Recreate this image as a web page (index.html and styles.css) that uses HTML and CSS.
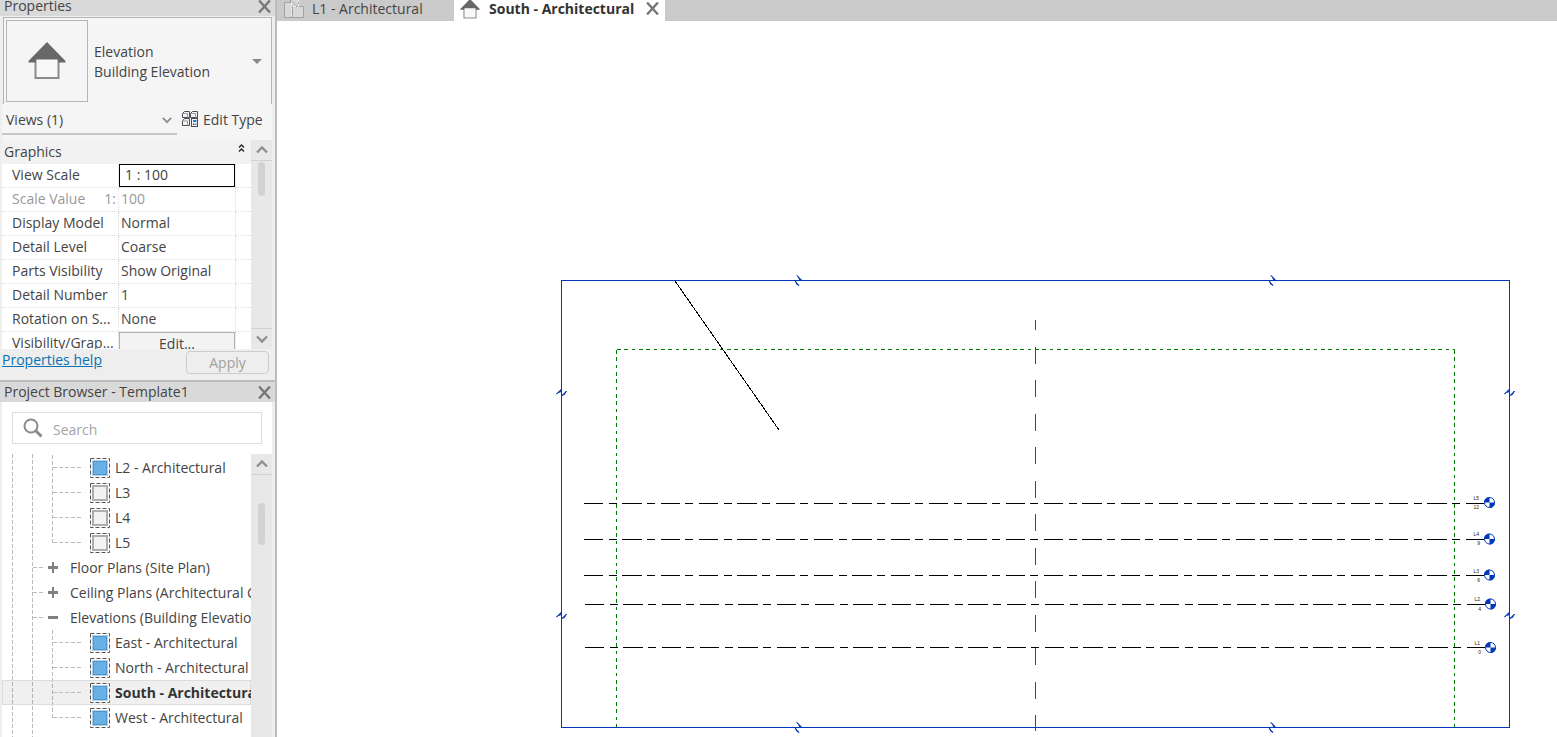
FILE: index.html
```html
<!DOCTYPE html>
<html lang="en">
<head>
<meta charset="utf-8">
<title>South - Architectural</title>
<link rel="stylesheet" href="styles.css">
</head>
<body>
<svg class="defs" aria-hidden="true">
  <symbol id="close" viewBox="0 0 12 12"><path d="M1 0.500L11 11.500M11 0.500L1 11.500" fill="none" stroke="#767676" stroke-width="2.200"/></symbol>
  <symbol id="up" viewBox="0 0 12 8"><path d="M1 6.500L6 1.500L11 6.500" fill="none" stroke="#8f8f8f" stroke-width="2.400"/></symbol>
  <symbol id="down" viewBox="0 0 12 8"><path d="M1 1.500L6 6.500L11 1.500" fill="none" stroke="#8f8f8f" stroke-width="2.400"/></symbol>
  <symbol id="house" viewBox="0 0 38 38"><path d="M7.500 17V36H30.500V17" fill="#f8f8f8" stroke="#8c8c8c" stroke-width="2"/><path d="M19 0L37.500 19V20.500H30V17.500H8V20.500H0.500V19Z" fill="#686868"/></symbol>
  <symbol id="view-on" viewBox="0 0 20 20"><rect x="0.500" y="0.500" width="19" height="19" fill="#fff" stroke="#555" stroke-dasharray="4 2"/><rect x="2" y="2" width="16" height="16" fill="#b5cfe3"/><rect x="3.500" y="3.500" width="13" height="13" fill="#69b0e5" stroke="#4b98d1"/></symbol>
  <symbol id="view-off" viewBox="0 0 20 20"><rect x="0.500" y="0.500" width="19" height="19" fill="#fff" stroke="#555" stroke-dasharray="4 2"/><rect x="3" y="3" width="14" height="14" fill="#f2f2f2" stroke="#adadad" stroke-width="2"/></symbol>
</svg>
<div class="app">
  <aside class="side">
    <section class="panel properties">
      <header class="bar bar-first"><h2>Properties</h2><button class="close" aria-label="Close properties"><svg><use href="#close"/></svg></button></header>
      <button class="type">
        <span class="type-icon"><svg><use href="#house"/></svg></span>
        <span class="type-name">Elevation<br>Building Elevation</span>
        <span class="triangle"></span>
      </button>
      <div class="filter">
        <div class="pick">
          <select aria-label="Property filter"><option>Views (1)</option></select>
          <svg class="chev"><use href="#down"/></svg>
        </div>
        <button class="edit-type">
          <svg viewBox="0 0 17 17"><g fill="#f4f4f6" stroke="#4c4c55"><path d="M0.500 6.500V2.500L2.500 0.500H7.500V6.500ZM8.500 6.500V2.500L10.500 0.500H15.500V6.500ZM0.500 14.500V10L2.500 7.500H7.500V14.500Z"/><path d="M0.500 2.500H5.500V6.500M8.500 2.500H13.500V6.500M0.500 10H5.500V14.500" stroke="#9a9aa2"/><rect x="9.500" y="7.500" width="6" height="8"/></g><path d="M11 9H14.500V11H11Z" fill="#1780d0"/><path d="M11 12.500H12.500V14H11ZM13.500 12.500H14.500V14H13.500Z" fill="#4c4c55"/></svg>
          Edit Type</button>
      </div>
      <div class="grid">
        <div class="grid-main">
          <button class="group">Graphics <svg viewBox="0 0 6 8"><path d="M0.500 3.500L3 1L5.500 3.500M0.500 7.500L3 5L5.500 7.500" fill="none" stroke="#222" stroke-width="1.300"/></svg></button>
          <table>
            <tr><th><label for="scale">View Scale</label></th><td class="field"><input id="scale" value="1 : 100"></td><td></td></tr>
            <tr class="off"><th>Scale Value <span>1:</span></th><td>100</td><td></td></tr>
            <tr><th>Display Model</th><td>Normal</td><td></td></tr>
            <tr><th>Detail Level</th><td>Coarse</td><td></td></tr>
            <tr><th>Parts Visibility</th><td>Show Original</td><td></td></tr>
            <tr><th>Detail Number</th><td>1</td><td></td></tr>
            <tr><th>Rotation on S...</th><td>None</td><td></td></tr>
            <tr><th>Visibility/Grap...</th><td class="field"><button>Edit...</button></td><td></td></tr>
          </table>
        </div>
        <div class="scroll"><button aria-label="Scroll up"><svg class="chev"><use href="#up"/></svg></button><div class="thumb"></div><button class="last" aria-label="Scroll down"><svg class="chev"><use href="#down"/></svg></button></div>
      </div>
      <footer class="foot"><a href="#help">Properties help</a><button disabled>Apply</button></footer>
    </section>
    <section class="panel browser">
      <header class="bar"><h2>Project Browser - Template1</h2><button class="close" aria-label="Close project browser"><svg><use href="#close"/></svg></button></header>
      <div class="browser-body">
        <label class="search">
          <svg viewBox="0 0 20 20"><circle cx="8" cy="8" r="6.500" fill="none" stroke="#8a8a8a" stroke-width="2"/><path d="M12.500 12.500L18.500 18.500" stroke="#8a8a8a" stroke-width="3"/></svg>
          <input type="search" placeholder="Search" aria-label="Search">
        </label>
        <div class="tree-wrap">
          <ul class="tree">
            <li><ul class="views">
              <li><svg><use href="#view-on"/></svg>L2 - Architectural</li>
              <li><svg><use href="#view-off"/></svg>L3</li>
              <li><svg><use href="#view-off"/></svg>L4</li>
              <li><svg><use href="#view-off"/></svg>L5</li>
            </ul></li>
            <li><div class="branch"><i class="sign plus"></i>Floor Plans (Site Plan)</div></li>
            <li><div class="branch"><i class="sign plus"></i>Ceiling Plans (Architectural Ceiling Plan)</div></li>
            <li><div class="branch"><i class="sign"></i>Elevations (Building Elevation)</div>
              <ul class="views">
              <li><svg><use href="#view-on"/></svg>East - Architectural</li>
              <li><svg><use href="#view-on"/></svg>North - Architectural</li>
              <li class="current"><svg><use href="#view-on"/></svg>South - Architectural</li>
              <li><svg><use href="#view-on"/></svg>West - Architectural</li>
            </ul></li>
          </ul>
          <div class="scroll"><button aria-label="Scroll up"><svg class="chev"><use href="#up"/></svg></button><div class="thumb thumb-low"></div></div>
        </div>
      </div>
    </section>
  </aside>
  <main class="work">
    <nav class="tabs">
      <button class="tab"><svg viewBox="0 0 20 20"><g fill="#d8d8d8" stroke="#a2a2a2"><path d="M6.500 0V3.500H0.500V18.500H14.500M6.500 0H14.500V6"/><path d="M8.500 7.500H19.500V18.500H8.500Z"/></g><path d="M7.500 4V18M9 7.500H15M14.500 0V8" fill="none" stroke="#eee" stroke-dasharray="3 2"/></svg>L1 - Architectural</button>
      <div class="tab active"><svg><use href="#house"/></svg><span>South - Architectural</span><button class="close" aria-label="Close tab"><svg><use href="#close"/></svg></button></div>
    </nav>
    <svg class="canvas" viewBox="277 21 1280 716" preserveAspectRatio="xMinYMin meet">
      <defs>
        <g id="head"><circle r="5" fill="#fff" stroke="#0038b8" stroke-width="1"/><path d="M0 0H-5.500A5.500 5.500 0 0 1 0 -5.500ZM0 0H5.500A5.500 5.500 0 0 1 0 5.500Z" fill="#0038b8"/></g>
        <path id="break-h" d="M-1.500 -5L3.500 0H1.500L0 -3ZM-4 0L0.500 5L-2 3.500L-3 0Z"/>
        <path id="break-v" d="M-5 1.500L0 -3.500V-1L-3 0ZM0 3.500L5 -1.500L3 2L0 3Z"/>
      </defs>
      <rect class="crop" x="561.500" y="280.500" width="948" height="447"/>
      <g class="break">
        <use href="#break-h" x="798.500" y="280.500"/><use href="#break-h" x="1272.500" y="280.500"/>
        <use href="#break-h" x="798.500" y="727.500"/><use href="#break-h" x="1272.500" y="727.500"/>
        <use href="#break-v" x="561.500" y="392.500"/><use href="#break-v" x="1509.500" y="392.500"/>
        <use href="#break-v" x="561.500" y="615.500"/><use href="#break-v" x="1509.500" y="615.500"/>
      </g>
      <path class="scope" d="M616.500 349.500H1454.500M616.500 349.500V727M1454.500 349.500V727"/>
      <path class="axis" d="M1035.500 320V731"/>
      <path class="slope" d="M675 281L779 430"/>
      <path class="level" d="M584 503.500H1484"/>
      <path class="level" d="M584 539.500H1484"/>
      <path class="level" d="M584 575.500H1484"/>
      <path class="level" d="M585 604.500H1485"/>
      <path class="level" d="M585 647.500H1485"/>
      <g>
        <use href="#head" x="1489.500" y="502.500"/><use href="#head" x="1489.500" y="539"/><use href="#head" x="1489.500" y="575"/><use href="#head" x="1490.500" y="604"/><use href="#head" x="1490.500" y="647.500"/>
      </g>
      <g class="mark">
        <text x="1479" y="500">L5</text><text x="1479" y="509">12</text>
        <text x="1479" y="536">L4</text><text x="1480" y="545">9</text>
        <text x="1479" y="573">L3</text><text x="1480" y="582">6</text>
        <text x="1480" y="601">L2</text><text x="1481" y="611">4</text>
        <text x="1480" y="645">L1</text><text x="1481" y="654">0</text>
      </g>
    </svg>
  </main>
</div>
</body>
</html>
```
FILE: styles.css
```css
* { box-sizing: border-box; }
body { margin: 0; font: 14px/20px "Open Sans", "Noto Sans", sans-serif; color: #444; background: #fff; }
button, input, select { font: inherit; color: inherit; border: 0; padding: 0; margin: 0; background: none; border-radius: 0; appearance: none; outline: 0; }
ul { list-style: none; margin: 0; padding: 0; }
.defs { display: none; }
.app { display: flex; height: 100vh; overflow: hidden; }
.side { flex: none; width: 277px; display: flex; flex-direction: column; background: #eee; border-right: 2px solid #bcbcbc; }
.bar { display: flex; align-items: center; justify-content: space-between; height: 20px; padding: 0 4px; background: #d9d9d9; }
.bar-first { height: 16px; padding-bottom: 4px; }
.bar h2 { margin: 0; font-size: 14px; font-weight: 400; }
.close { display: flex; }
.close svg { width: 13px; height: 13px; }
.properties { display: flex; flex-direction: column; border-bottom: 2px solid #bcbcbc; }
.type { display: flex; align-items: center; margin: 1px 3px 0; padding: 2px; height: 87px; text-align: left; background: #f5f5f5; border: 1px solid #b5b5b5; border-bottom: 0; }
.type-icon { display: flex; align-items: center; justify-content: center; width: 82px; height: 82px; border: 1px solid #b5b5b5; }
.type-icon svg { width: 38px; height: 38px; }
.type-name { flex: 1; margin-left: 6px; padding-top: 2px; }
.triangle { margin-right: 7px; border: 5px solid transparent; border-top-color: #8a8a8a; border-bottom: 0; }
.filter { display: flex; margin: 0 3px 0 2px; height: 36px; background: #f5f5f5; padding-bottom: 5px; }
.pick { display: flex; align-items: center; width: 175px; padding: 2px 5px 0 4px; border-bottom: 2px solid #c8c8c8; }
.pick select { flex: 1; }
.chev { width: 12px; height: 8px; }
.pick .chev { width: 10px; }
.edit-type { display: flex; align-items: center; gap: 4px; margin-left: 5px; }
.edit-type svg { width: 17px; height: 17px; }
.grid { display: flex; height: 209px; margin: 0 3px 0 2px; overflow: hidden; }
.grid-main { flex: 1; background: #fff; }
.group { display: flex; justify-content: space-between; width: 100%; height: 24px; padding: 2px 6px 0 2px; background: #f2f2f2; }
.group svg { width: 7px; height: 8px; margin-top: 2px; }
table { width: 100%; table-layout: fixed; border-collapse: separate; border-spacing: 0; }
th, td { height: 24px; padding: 0 0 2px 2px; text-align: left; font-weight: 400; white-space: nowrap; line-height: 20px; border-right: 1px dotted #ddd; border-bottom: 1px dotted #ddd; }
th { width: 117px; padding-left: 10px; }
td:last-child { width: 15px; border-right: 0; padding: 0; }
th span { float: right; margin-right: 2px; }
.off { color: #999; }
.field { padding: 0; }
.field input { display: block; width: 100%; height: 23px; padding: 0 5px 2px; border: 1px solid #000; }
.field button { display: block; width: 100%; height: 23px; background: #f3f3f3; border: 1px solid #b0b0b0; }
.scroll { flex: none; width: 21px; display: flex; flex-direction: column; background: #e8e8e8; }
.scroll button { display: flex; align-items: center; justify-content: center; height: 21px; border-bottom: 1px solid #d2d2d2; }
.scroll .last { margin-top: auto; border-bottom: 0; border-top: 1px solid #d2d2d2; }
.thumb { width: 7px; height: 34px; margin: 1px 7px; border-radius: 4px; background: #d2d2d2; }
.thumb-low { height: 42px; margin-top: 28px; }
.foot { display: flex; align-items: flex-start; justify-content: space-between; height: 31px; padding: 1px 6px 0 2px; }
.foot a { color: #0b71b0; }
.foot button { width: 83px; height: 23px; margin-top: 1px; border: 1px solid #ccc; border-radius: 4px; color: #a0a0a0; }
.browser { flex: 1; display: flex; flex-direction: column; min-height: 0; }
.browser-body { flex: 1; display: flex; flex-direction: column; min-height: 0; margin: 0 3px 0 2px; background: #fff; }
.search { display: flex; align-items: center; gap: 10px; height: 32px; margin: 10px; padding: 0 10px; border: 1px solid #ddd; }
.search svg { width: 20px; height: 20px; }
.search input { flex: 1; min-width: 0; padding-top: 3px; }
.search input::placeholder { color: #a5a5a5; }
.tree-wrap { flex: 1; display: flex; min-height: 0; }
.tree { flex: 1; min-width: 0; padding-top: 1px; overflow: hidden; white-space: nowrap; line-height: 25px;
  background: repeating-linear-gradient(#bbb 0 4px, transparent 4px 6px) 10px 0 / 1px 100% no-repeat, repeating-linear-gradient(#bbb 0 4px, transparent 4px 6px) 30px 0 / 1px 100% no-repeat; }
.views { background: repeating-linear-gradient(#bbb 0 4px, transparent 4px 6px) 50px 0 / 1px calc(100% - 12px) no-repeat; }
.views li { display: flex; align-items: center; gap: 5px; height: 25px; padding-left: 88px; background: repeating-linear-gradient(90deg, #bbb 0 4px, transparent 4px 6px) 51px 12px / 30px 1px no-repeat; }
.views svg { flex: none; width: 20px; height: 20px; }
.views .current { font-weight: 700; color: #333; background-color: rgba(0, 0, 0, 0.06); box-shadow: inset 0 0 0 1px #ddd; }
.branch { display: flex; align-items: center; gap: 12px; height: 25px; padding-left: 46px; background: repeating-linear-gradient(90deg, #bbb 0 4px, transparent 4px 6px) 31px 12px / 10px 1px no-repeat; }
.sign { flex: none; width: 10px; height: 11px; background: linear-gradient(#808080, #808080) center / 10px 3px no-repeat; }
.plus { background: linear-gradient(#808080, #808080) center / 10px 3px no-repeat, linear-gradient(#808080, #808080) center / 2px 11px no-repeat; }
.work { flex: 1; min-width: 0; display: flex; flex-direction: column; }
.tabs { flex: none; display: flex; height: 21px; background: #cacaca; }
.tab { display: flex; align-items: center; width: 177px; padding: 0 7px 4px; gap: 8px; white-space: nowrap; }
.tab > svg { width: 20px; height: 20px; }
.active { width: 211px; padding: 0 6px 4px; gap: 9px; background: #fff; font-weight: 700; color: #333; }
.active .close { margin-left: auto; }
.canvas { display: block; flex: 1; width: 100%; min-height: 0; }
.crop { fill: none; stroke: #0038b8; shape-rendering: crispEdges; }
.break { fill: #0038b8; stroke: #0038b8; stroke-width: 1; }
.scope { fill: none; stroke: #007a00; stroke-dasharray: 4 3 4 4 3 4; shape-rendering: crispEdges; }
.axis { stroke: #007a00; stroke-dasharray: 17 16 17 17; stroke-dashoffset: 40; shape-rendering: crispEdges; }
.slope { stroke: #000; shape-rendering: crispEdges; }
.level { stroke: #000; stroke-dasharray: 19 6 8 5 20 5 8 6 19 5 8 6; shape-rendering: crispEdges; }
.mark { font: 5px "Liberation Sans", sans-serif; fill: #222; text-anchor: end; }
```
